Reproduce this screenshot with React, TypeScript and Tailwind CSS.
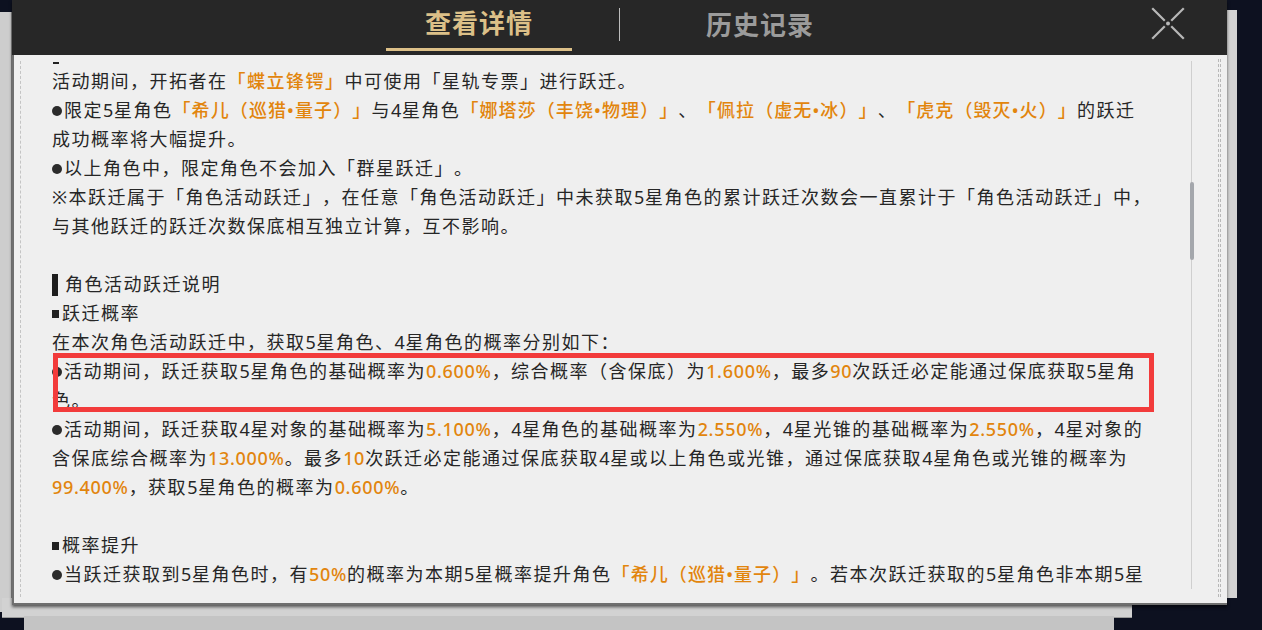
import React from "react";

const O = ({ children }: { children: React.ReactNode }) => (
  <span className="font-medium text-[#e2850d]">{children}</span>
);

// bracketed names run a little tighter in the game font
const B = ({ children }: { children: React.ReactNode }) => (
  <span className="font-medium tracking-[1.1px] text-[#e2850d]">{children}</span>
);

const N = ({ children }: { children: React.ReactNode }) => (
  <span className="tracking-[0.7px]">{children}</span>
);

const Dot = () => (
  <span className="mr-[2px] inline-block h-[10px] w-[10px] translate-y-[-1px] rounded-full bg-[#2b2b2b] align-middle" />
);

const Sq = () => (
  <span className="mr-[3px] inline-block h-[8px] w-[7px] translate-y-[-1px] bg-[#222] align-middle" />
);

function Line({ children }: { children?: React.ReactNode }) {
  return <div className="h-[29px] whitespace-nowrap leading-[29px]">{children}</div>;
}

function CloseIcon() {
  return (
    <svg width="34" height="33" viewBox="0 0 34 33" fill="none">
      <g stroke="#b8b8b8" strokeWidth="2.2" strokeLinecap="square">
        <line x1="2" y1="2" x2="13" y2="13" />
        <line x1="32" y1="2" x2="21" y2="13" />
        <line x1="2" y1="31" x2="13" y2="20" />
        <line x1="32" y1="31" x2="21" y2="20" />
      </g>
      <circle cx="17" cy="16.5" r="2" fill="#b8b8b8" />
    </svg>
  );
}

export default function App() {
  return (
    <div className="relative h-[630px] w-[1262px] overflow-hidden bg-[#0d1120] font-['Noto_Sans','Noto_Sans_CJK_SC',sans-serif]">
      {/* stacked papers behind */}
      <div className="absolute left-0 top-[12px] h-[600px] w-[14px] border-r-[3px] border-[#8a8a8a] bg-[#cdcdcd]" />
      <div className="absolute left-[2px] top-[598px] h-[20px] w-[1130px] border-b border-[#9a9a9a] bg-[#d2d2d2]" />
      <div className="absolute left-[24px] top-[616px] h-[20px] w-[1090px] bg-[#c4c4c4]" />
      <div className="absolute left-[1222px] top-[10px] h-[588px] w-[15px] border-l-2 border-[#9c9c9c] bg-[#d3d3d3]" />

      <div className="relative ml-[12px] flex h-[605px] w-[1215px] flex-col shadow-[0_2px_3px_rgba(0,0,0,0.6)]">
        {/* header */}
        <div className="flex h-[55px] shrink-0 items-start bg-[#272727]">
          <div className="ml-[374px] flex h-[51px] w-[186px] items-center justify-center border-b-[3px] border-[#dcc088] pb-[5px] text-[26px] font-bold tracking-[1px] text-[#dcc088] font-['Noto_Sans_CJK_SC',sans-serif]">
            查看详情
          </div>
          <div className="ml-[47px] mt-[8px] h-[33px] w-[1px] bg-[#bdbdbd]" />
          <div className="ml-[47px] flex h-[51px] w-[186px] items-center justify-center pb-[5px] text-[26px] font-bold tracking-[1px] text-[#9b9b9b] font-['Noto_Sans_CJK_SC',sans-serif]">
            历史记录
          </div>
          <div className="ml-auto mr-[42px] mt-[7px]">
            <CloseIcon />
          </div>
        </div>

        {/* body */}
        <div className="relative flex-1 overflow-hidden border-b-2 border-l-2 border-[#6f6f6f] bg-[#efefef]">
          <div className="absolute bottom-[6px] left-[6px] top-[6px] border-l border-dashed border-[#c4c4c4]" />
          <div className="absolute bottom-[6px] right-[6px] top-[4px] w-[3px] border-x border-dashed border-[#b8b8b8]" />
          {/* scrollbar */}
          <div className="absolute bottom-[14px] left-[1177px] top-[6px] w-[1px] bg-[#cfcfcf]" />
          <div className="absolute left-[1176px] top-[127px] h-[78px] w-[4px] rounded-full bg-[#a4a7ac]" />

          <div className="ml-[38px] pt-[7px] text-[18px] tracking-[1.5px] text-[#262626] [text-spacing-trim:space-all]">
            <div className="h-[5px]">
              <div className="ml-[1px] h-[2px] w-[6px] bg-[#222]" />
            </div>
            <Line>
              活动期间，开拓者在<O>「蝶立锋锷」</O>中可使用「星轨专票」进行跃迁。
            </Line>
            <Line>
              <Dot />
              限定<N>5</N>星角色<B>「希儿（巡猎•量子）」</B>与<N>4</N>星角色<B>「娜塔莎（丰饶•物理）」</B>、<B>「佩拉（虚无•冰）」</B>、<B>「虎克（毁灭•火）」</B>的跃迁
            </Line>
            <Line>成功概率将大幅提升。</Line>
            <Line>
              <Dot />
              以上角色中，限定角色不会加入「群星跃迁」。
            </Line>
            <Line>※本跃迁属于「角色活动跃迁」，在任意「角色活动跃迁」中未获取<N>5</N>星角色的累计跃迁次数会一直累计于「角色活动跃迁」中，</Line>
            <Line>与其他跃迁的跃迁次数保底相互独立计算，互不影响。</Line>
            <Line />
            <Line>
              <span className="mr-[7px] inline-block h-[22px] w-[6px] translate-y-[-1px] bg-[#1e1e1e] align-middle" />
              角色活动跃迁说明
            </Line>
            <Line>
              <Sq />
              跃迁概率
            </Line>
            <Line>在本次角色活动跃迁中，获取<N>5</N>星角色、<N>4</N>星角色的概率分别如下：</Line>
            <div className="relative">
              <Line>
                <Dot />
                活动期间，跃迁获取<N>5</N>星角色的基础概率为<O><N>0.600%</N></O>，综合概率（含保底）为<O><N>1.600%</N></O>，最多<O><N>90</N></O>次跃迁必定能通过保底获取<N>5</N>星角
              </Line>
              <Line>色。</Line>
              <div className="absolute left-[1px] top-[-4px] h-[59px] w-[1101px] border-[5px] border-[#f23b3b]" />
            </div>
            <Line>
              <Dot />
              活动期间，跃迁获取<N>4</N>星对象的基础概率为<O><N>5.100%</N></O>，<N>4</N>星角色的基础概率为<O><N>2.550%</N></O>，<N>4</N>星光锥的基础概率为<O><N>2.550%</N></O>，<N>4</N>星对象的
            </Line>
            <Line>
              含保底综合概率为<O><N>13.000%</N></O>。最多<O><N>10</N></O>次跃迁必定能通过保底获取<N>4</N>星或以上角色或光锥，通过保底获取<N>4</N>星角色或光锥的概率为
            </Line>
            <Line>
              <O><N>99.400%</N></O>，获取<N>5</N>星角色的概率为<O><N>0.600%</N></O>。
            </Line>
            <Line />
            <Line>
              <Sq />
              概率提升
            </Line>
            <Line>
              <Dot />
              当跃迁获取到<N>5</N>星角色时，有<O><N>50%</N></O>的概率为本期<N>5</N>星概率提升角色<B>「希儿（巡猎•量子）」</B>。若本次跃迁获取的<N>5</N>星角色非本期<N>5</N>星
            </Line>
          </div>
        </div>
      </div>
    </div>
  );
}
